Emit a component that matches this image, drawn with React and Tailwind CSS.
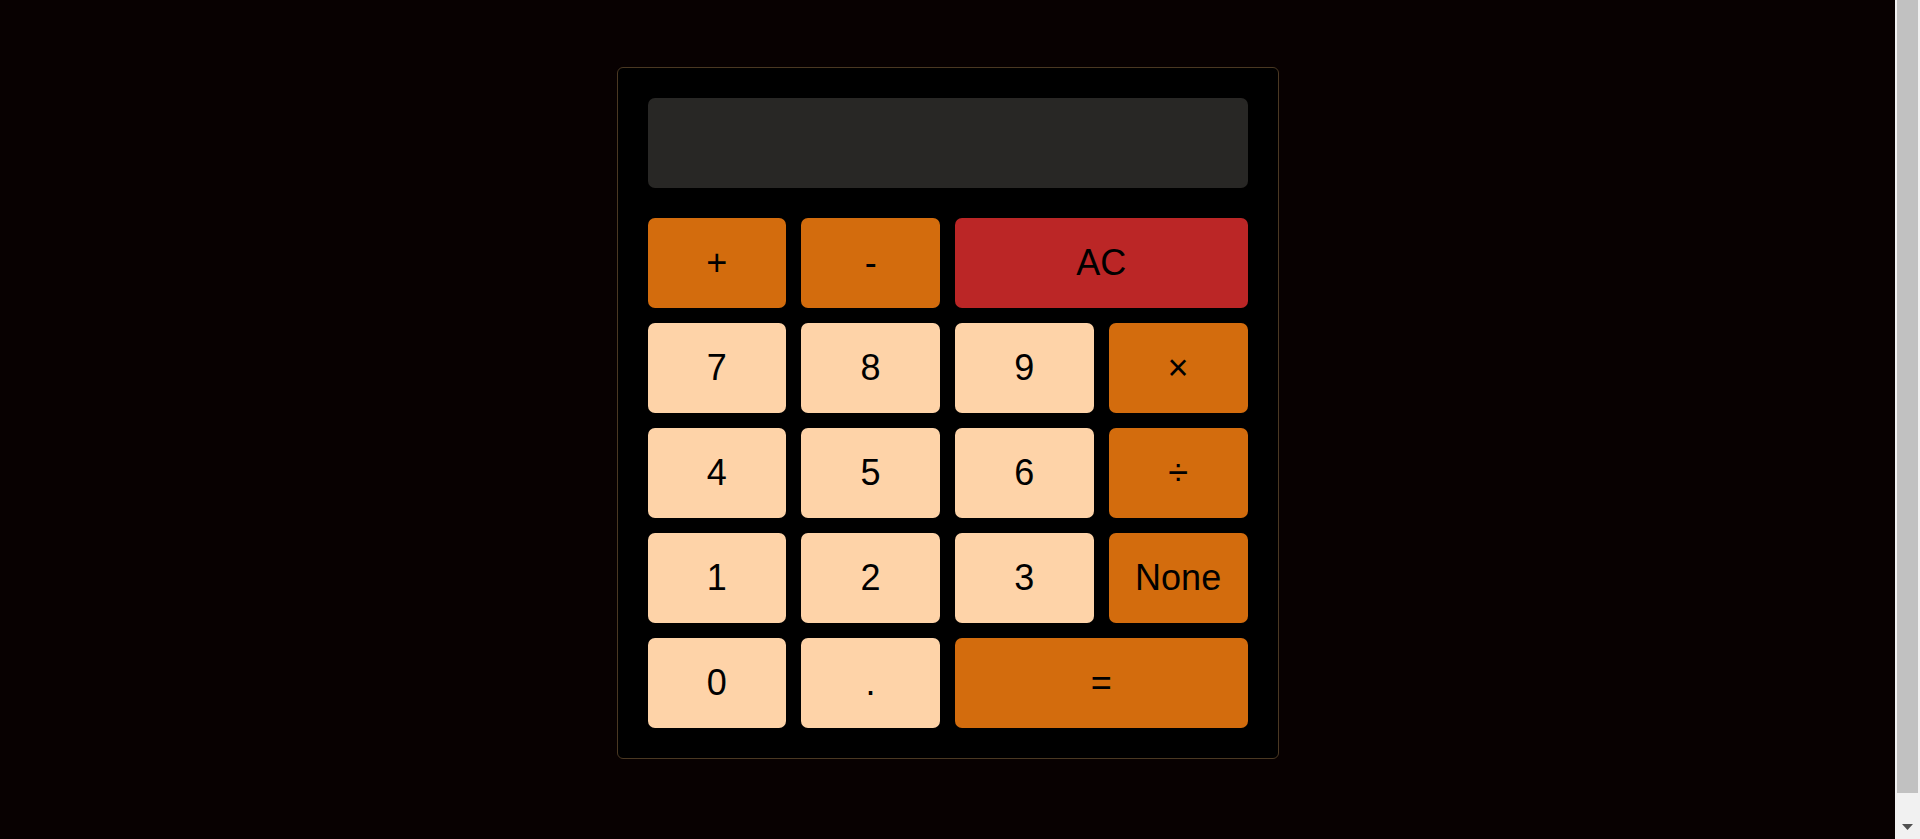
import React from 'react'

const KEYS = [
  { label: '+', kind: 'op' },
  { label: '-', kind: 'op' },
  { label: 'AC', kind: 'clear', wide: true },
  { label: '7', kind: 'num' },
  { label: '8', kind: 'num' },
  { label: '9', kind: 'num' },
  { label: '×', kind: 'op' },
  { label: '4', kind: 'num' },
  { label: '5', kind: 'num' },
  { label: '6', kind: 'num' },
  { label: '÷', kind: 'op' },
  { label: '1', kind: 'num' },
  { label: '2', kind: 'num' },
  { label: '3', kind: 'num' },
  { label: 'None', kind: 'op' },
  { label: '0', kind: 'num' },
  { label: '.', kind: 'num' },
  { label: '=', kind: 'op', wide: true },
]

const COLORS = {
  num: 'bg-[#fed3a8]',
  op: 'bg-[#d36c0d]',
  clear: 'bg-[#bb2626]',
}

function Scrollbar() {
  return (
    <div className="flex w-[25px] shrink-0 flex-col bg-[#f1f1f1]">
      <div className="ml-[2px] h-[793px] w-[21px] bg-[#c1c1c1]" />
      <div className="flex flex-1 items-start justify-center pt-[31px]">
        <svg width="11" height="6" viewBox="0 0 11 6">
          <polygon points="0,0 11,0 5.5,6" fill="#505050" />
        </svg>
      </div>
    </div>
  )
}

export default function App() {
  return (
    <div className="flex h-[839px] overflow-hidden bg-[#080101] font-['Liberation_Sans',Arial,sans-serif]">
      <main className="flex-1 pt-[67px]">
        <div className="mx-auto w-[662px] rounded-md border border-[#4a3822] bg-black p-[30px]">
          {/* display */}
          <div className="h-[90px] rounded-[7px] bg-[#282725]" />

          {/* keys */}
          <div className="mt-[30px] grid grid-cols-4 gap-[15px]">
            {KEYS.map((k) => (
              <button
                key={k.label}
                className={`flex h-[90px] items-center justify-center rounded-[7px] text-[36px] leading-none text-black ${COLORS[k.kind]} ${
                  k.wide ? 'col-span-2' : ''
                }`}
              >
                {k.label}
              </button>
            ))}
          </div>
        </div>
      </main>
      <Scrollbar />
    </div>
  )
}
